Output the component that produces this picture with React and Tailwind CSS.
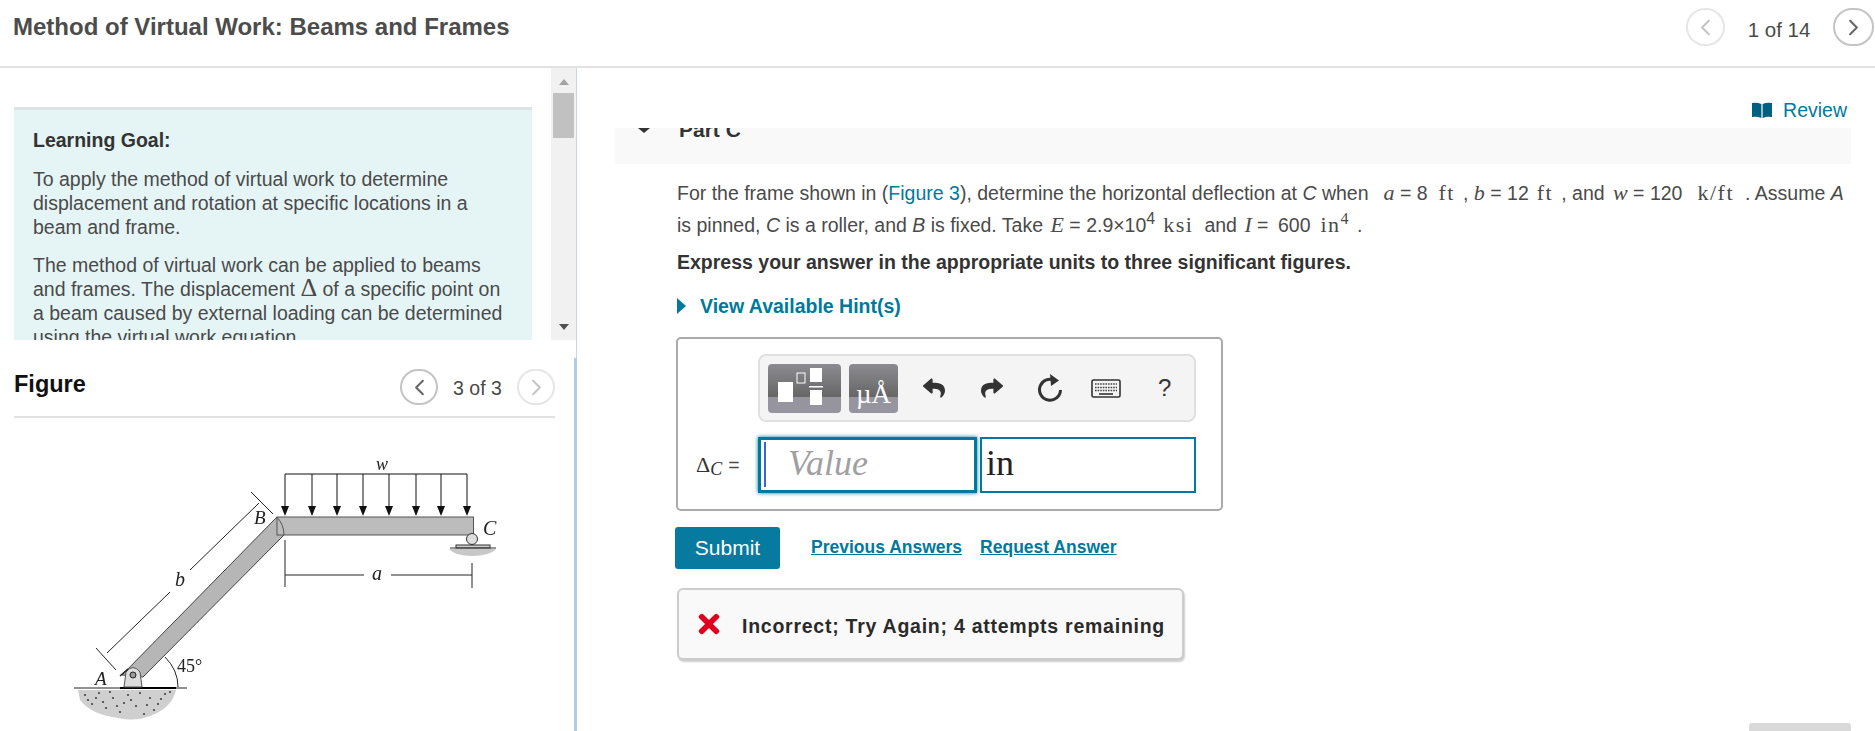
import { ChevronLeft, ChevronRight } from "lucide-react";
import { FaReply, FaShare, FaTimes } from "react-icons/fa";

const sans = "font-['Liberation_Sans',Arial,sans-serif]";

function NavCircle({ dir, off, size = "w-[39px] h-[38px]" }) {
  const Icon = dir === "left" ? ChevronLeft : ChevronRight;
  return (
    <button className={`${size} rounded-full border-2 flex items-center justify-center bg-white ${off ? "border-[#e6e6e6] text-[#c4c4c4]" : "border-[#c4c4c4] text-[#666]"}`}>
      <Icon size={27} strokeWidth={1.8} />
    </button>
  );
}

function M({ children, className = "" }) {
  return <span className={`font-['Liberation_Serif',serif] italic text-[22px] ${className}`}>{children}</span>;
}

function U({ children, className = "mx-[8px]" }) {
  return <span className={`font-['Liberation_Serif',serif] text-[22px] tracking-[1.5px] ${className}`}>{children}</span>;
}

const specks = [
  [85, 695], [92, 704], [99, 693], [106, 708], [113, 698], [120, 712], [128, 695], [136, 706], [144, 714], [150, 698], [158, 704], [165, 694],
  [110, 692], [124, 703], [96, 698], [88, 700], [103, 702], [117, 706], [131, 700], [140, 693], [147, 705], [154, 710], [161, 699], [170, 692],
];

function FrameFigure() {
  const arrows = [285, 312, 337, 363, 389, 416, 441, 467];
  return (
    <svg viewBox="0 430 570 301" width="570" height="301" className="block blur-[0.6px]">
      {/* ground under the pin */}
      <path d="M78 690 H176 Q172 708 150 716 Q135 722 118 718 Q90 714 80 700 Z" fill="#cfcfcf" />
      {specks.map(([x, y]) => (
        <circle key={`${x}-${y}`} cx={x} cy={y} r="1.1" fill="#444" />
      ))}
      <line x1="74" y1="688" x2="187" y2="688" stroke="#222" strokeWidth="1" />
      <line x1="120" y1="688" x2="176" y2="688" stroke="#000" strokeWidth="2" />

      {/* diagonal member */}
      <polygon points="277,517 284,535 143,677 122,675" fill="#b6b6b6" stroke="#444" strokeWidth="1" />
      {/* pin support */}
      <path d="M124 687 L126 672 Q133 663 140 672 L142 687 Z" fill="#dcdcdc" stroke="#555" strokeWidth="1" />
      <circle cx="133" cy="675" r="3" fill="#999" stroke="#222" strokeWidth="1" />
      <path d="M120 676 L128 669" stroke="#222" strokeWidth="1.5" />

      {/* horizontal member */}
      <rect x="277" y="517" width="196.5" height="18" fill="#bcbcbc" stroke="#555" strokeWidth="1" />
      <path d="M277 517 Q284 525 284 535" fill="none" stroke="#555" strokeWidth="1" />

      {/* roller */}
      <circle cx="472" cy="539" r="5.5" fill="#ddd" stroke="#333" strokeWidth="1" />
      <rect x="456" y="545" width="34" height="3" fill="#ccc" stroke="#333" strokeWidth="1" />
      <path d="M449 549 H496 Q490 556 472 556 Q455 556 449 549 Z" fill="#c8c8c8" />
      <line x1="450" y1="548" x2="496" y2="548" stroke="#333" strokeWidth="1" />

      {/* distributed load */}
      <line x1="285" y1="474" x2="467" y2="474" stroke="#111" strokeWidth="1" />
      {arrows.map((x) => (
        <g key={x}>
          <line x1={x} y1="474" x2={x} y2="508" stroke="#111" strokeWidth="1" />
          <polygon points={`${x - 4},506 ${x + 4},506 ${x},516`} fill="#111" />
        </g>
      ))}

      {/* dimension b */}
      <line x1="96" y1="648" x2="116" y2="670" stroke="#222" strokeWidth="1" />
      <line x1="251" y1="492" x2="273" y2="514" stroke="#222" strokeWidth="1" />
      <line x1="107" y1="653" x2="170" y2="592" stroke="#222" strokeWidth="1" />
      <line x1="190" y1="570" x2="259" y2="503" stroke="#222" strokeWidth="1" />

      {/* dimension a */}
      <line x1="285" y1="540" x2="285" y2="587" stroke="#222" strokeWidth="1" />
      <line x1="472" y1="563" x2="472" y2="588" stroke="#222" strokeWidth="1" />
      <line x1="285" y1="575" x2="364" y2="575" stroke="#222" strokeWidth="1" />
      <line x1="391" y1="575" x2="472" y2="575" stroke="#222" strokeWidth="1" />

      {/* 45 degree arc */}
      <path d="M165 657 Q178 670 178 687" fill="none" stroke="#222" strokeWidth="1" />

      <g fontFamily="'Liberation Serif', serif" fontStyle="italic" fill="#222" fontSize="19">
        <text x="376" y="470" fontSize="18">w</text>
        <text x="254" y="524">B</text>
        <text x="483" y="535" fontSize="20">C</text>
        <text x="95" y="685">A</text>
        <text x="175" y="586" fontSize="20">b</text>
        <text x="372" y="580" fontSize="20">a</text>
        <text x="177" y="672" fontStyle="normal" fontSize="18">45°</text>
      </g>
    </svg>
  );
}

function TemplateIcon() {
  return (
    <svg width="73" height="49" viewBox="0 0 73 49">
      <rect x="10" y="18" width="15" height="20" fill="#fff" />
      <rect x="29" y="9" width="8" height="10" fill="none" stroke="#fff" strokeWidth="1" />
      <rect x="42" y="4" width="12" height="14" fill="#fff" />
      <rect x="41" y="22" width="14" height="1.5" fill="#fff" />
      <rect x="42" y="26" width="12" height="15" fill="#fff" />
    </svg>
  );
}

function KeyboardIcon() {
  return (
    <svg width="30" height="19" viewBox="0 0 30 19">
      <rect x="1" y="1" width="28" height="17" rx="1.5" fill="none" stroke="#333" strokeWidth="1.6" />
      <path d="M4 5h22M4 8.5h22M4 11.5h22" stroke="#444" strokeWidth="1.6" strokeDasharray="1.6 1" />
      <path d="M8 15h14" stroke="#333" strokeWidth="1.6" />
    </svg>
  );
}

function ResetIcon() {
  return (
    <svg width="26" height="28" viewBox="0 0 26 28">
      <path d="M18 6.5 A10.5 10.5 0 1 0 23.5 16" fill="none" stroke="#333" strokeWidth="3" />
      <polygon points="13,0 22,6.5 14,12" fill="#333" />
    </svg>
  );
}

function BookIcon() {
  return (
    <svg width="20" height="16" viewBox="0 0 20 16">
      <path d="M0 1 Q5 0 9.4 2 V16 Q5 14 0 15 Z M10.6 2 Q15 0 20 1 V15 Q15 14 10.6 16 Z" fill="#00607f" />
    </svg>
  );
}

export default function App() {
  return (
    <div className={`${sans} w-[1875px] h-[731px] overflow-hidden bg-white flex flex-col text-[#4a4a4a]`}>
      <header className="h-[68px] shrink-0 border-b-2 border-[#e2e2e2] flex pl-[13px] pr-px">
        <h1 className="flex-1 pt-[13px] text-[24px] leading-[28px] font-bold text-[#4c4c4c]">Method of Virtual Work: Beams and Frames</h1>
        <div className="flex items-start pt-[8px]">
          <NavCircle dir="left" off />
          <span className="w-[108px] text-center text-[20.5px] leading-[44px]">1 of 14</span>
          <NavCircle dir="right" size="w-[41px] h-[38px]" />
        </div>
      </header>

      <div className="flex flex-1 min-h-0">
        <aside className="w-[577px] shrink-0 flex flex-col relative">
          <div className="h-[272px] flex border-r border-[#c8d6e6]">
            <div className="flex-1 overflow-hidden pt-[39px] pl-[14px] pr-[19px]">
              <div className="h-[233px] bg-[#e5f5f6] border-t-[3px] border-[#dde4e5] px-[19px] pt-[18px] text-[19.5px] leading-[24px] overflow-hidden">
                <p className="font-bold text-[#333]">Learning Goal:</p>
                <p className="mt-[15px]">To apply the method of virtual work to determine displacement and rotation at specific locations in a beam and frame.</p>
                <p className="mt-[14px]">The method of virtual work can be applied to beams and frames. The displacement <span className="font-['Liberation_Serif',serif] text-[26px] leading-[0]">Δ</span> of a specific point on a beam caused by external loading can be determined using the virtual work equation.</p>
              </div>
            </div>
            <div className="w-[25px] bg-[#f1f1f1] flex flex-col items-center">
              <svg width="12" height="25" viewBox="0 0 12 25"><polygon points="1,17 11,17 6,11" fill="#a3a3a3" /></svg>
              <div className="w-[21px] h-[45px] bg-[#c1c1c1]" />
              <div className="flex-1" />
              <svg width="12" height="25" viewBox="0 0 12 25" className="mb-px"><polygon points="1,10 11,10 6,16" fill="#505050" /></svg>
            </div>
          </div>
          <div className="h-[18px] shrink-0 border-r border-[#c8d6e6]" />
          <div className="flex-1 border-r-[3px] border-[#b4cbe2] min-h-0">
            <div className="ml-[14px] mr-[19px] h-[60px] border-b-2 border-[#e2e2e2] flex items-start">
              <h2 className="flex-1 pt-[13px] text-[23.5px] leading-[26px] font-bold text-[#111]">Figure</h2>
              <div className="flex items-center pt-[11px]">
                <NavCircle dir="left" size="w-[38px] h-[36px]" />
                <span className="w-[79px] pt-[3px] text-center text-[19.5px]">3 of 3</span>
                <NavCircle dir="right" off size="w-[38px] h-[36px]" />
              </div>
            </div>
            <div className="mt-[12px]">
              <FrameFigure />
            </div>
          </div>
        </aside>

        <main className="flex-1 min-w-0 pl-[38px] pr-[24px]">
          <div className="h-[60px] flex items-start justify-end pr-[4px] pt-[30px] text-[19.5px] leading-[24px] text-[#00799c]">
            <span className="flex items-center gap-[11px]"><BookIcon />Review</span>
          </div>
          <div className="h-[36px] bg-[#f9f9f9] overflow-hidden flex items-start">
            <svg width="12" height="5" viewBox="0 0 12 5" className="ml-[23px] shrink-0"><polygon points="0,0 12,0 6,5" fill="#333" /></svg>
            <span className="ml-[29px] -mt-[8px] text-[21px] leading-[20px] font-bold text-[#333]">Part C</span>
          </div>

          <div className="pl-[62px] text-[19.5px]">
            <p className="mt-[13px] leading-[31px] whitespace-nowrap">
              For the frame shown in (<span className="text-[#00799c]">Figure 3</span>), determine the horizontal deflection at <i>C</i> when <M className="ml-[4px]">&nbsp;a</M> = 8<U className="ml-[11px] mr-[8px]">ft</U>, <M>b</M> = 12<U>ft</U>, and <M className="ml-[3px]">w</M> = 120<U className="ml-[15px] mr-[11px]">k/ft</U>. Assume <i>A</i>
              <br />
              is pinned, <i>C</i> is a roller, and <i>B</i> is fixed. Take <M className="ml-[2px]">E</M> = 2.9×10<sup className="text-[16px]">4</sup><U className="ml-[8px] mr-[11px]">ksi</U>and <M className="ml-[2px]">I</M> = <span className="ml-[4px]">600</span><U className="ml-[10px] mr-[7px]">in<sup className="text-[16px]">4</sup></U>.
            </p>
            <p className="mt-[9px] leading-[24px] font-bold text-[#333]">Express your answer in the appropriate units to three significant figures.</p>
            <p className="mt-[20px] leading-[24px] font-bold text-[#00799c] flex items-center gap-[14px]">
              <svg width="9" height="16" viewBox="0 0 9 16"><polygon points="0,0 9,8 0,16" fill="#00799c" /></svg>
              View Available Hint(s)
            </p>

            <div className="mt-[19px] -ml-px w-[547px] h-[174px] border-2 border-[#aaa] rounded-[5px] pl-[80px] pr-[25px] pt-[15px]">
              <div className="h-[68px] bg-[#f4f4f4] border-2 border-[#e0e0e0] rounded-[8px] flex items-center pl-[8px]">
                <div className="w-[73px] h-[49px] rounded-[4px] bg-[linear-gradient(#8c8b91,#666_68%,#96959f_68%)]"><TemplateIcon /></div>
                <div className="ml-[8px] w-[49px] h-[49px] rounded-[4px] bg-[linear-gradient(#8c8b91,#666_68%,#96959f_68%)] text-white text-[27px] leading-[60px] text-center font-['Liberation_Serif',serif]">µÅ</div>
                <FaReply className="ml-[25px] text-[#333]" size={22} />
                <FaShare className="ml-[36px] text-[#333]" size={22} />
                <span className="ml-[34px]"><ResetIcon /></span>
                <span className="ml-[28px]"><KeyboardIcon /></span>
                <span className="ml-[37px] text-[24px] text-[#333]">?</span>
              </div>
              <div className="flex mt-[15px] relative">
                <span className="absolute -left-[62px] top-[11px] text-[19.5px] whitespace-nowrap">
                  <span className="font-['Liberation_Serif',serif] text-[#333] text-[22px]">Δ<i className="text-[18px] relative top-[3px]">C</i></span><span className="ml-[6px]">=</span>
                </span>
                <div className="w-[219px] h-[56px] border-[3px] border-[#00799c] shadow-[0_0_4px_#00799c] pl-[27px] font-['Liberation_Serif',serif] italic text-[36px] leading-[46px] text-[#a0a0a0] relative">
                  <span className="absolute left-[3px] top-[2px] w-[2px] h-[45px] bg-[#3b62d8]" />
                  Value
                </div>
                <div className="ml-[3px] w-[216px] h-[56px] border-2 border-[#00799c] pl-[4px] font-['Liberation_Serif',serif] text-[36px] leading-[48px] text-[#222]">in</div>
              </div>
            </div>

            <div className="mt-[16px] flex items-start -ml-[2px]">
              <button className="w-[105px] h-[42px] bg-[#067a9f] rounded-[3px] text-white text-[21px]">Submit</button>
              <a className="ml-[31px] mt-[8px] text-[17.5px] leading-[24px] font-bold underline text-[#00799c]">Previous Answers</a>
              <a className="ml-[18px] mt-[8px] text-[17.5px] leading-[24px] font-bold underline text-[#00799c]">Request Answer</a>
            </div>

            <div className="mt-[19px] w-[507px] h-[72px] bg-[#f9f9f9] border-2 border-[#ccc] rounded-[6px] shadow-[1px_2px_2px_#ccc] flex items-center pl-[15px]">
              <FaTimes className="text-[#e2001f]" size={30} />
              <span className="ml-[18px] pt-[5px] text-[19.5px] font-bold tracking-[0.75px] text-[#2a2a2a]">Incorrect; Try Again; 4 attempts remaining</span>
            </div>

            <div className="mt-[63px] flex justify-end">
              <div className="w-[102px] h-[42px] bg-[#d9d9d9] rounded-[3px]" />
            </div>
          </div>
        </main>
      </div>
    </div>
  );
}
